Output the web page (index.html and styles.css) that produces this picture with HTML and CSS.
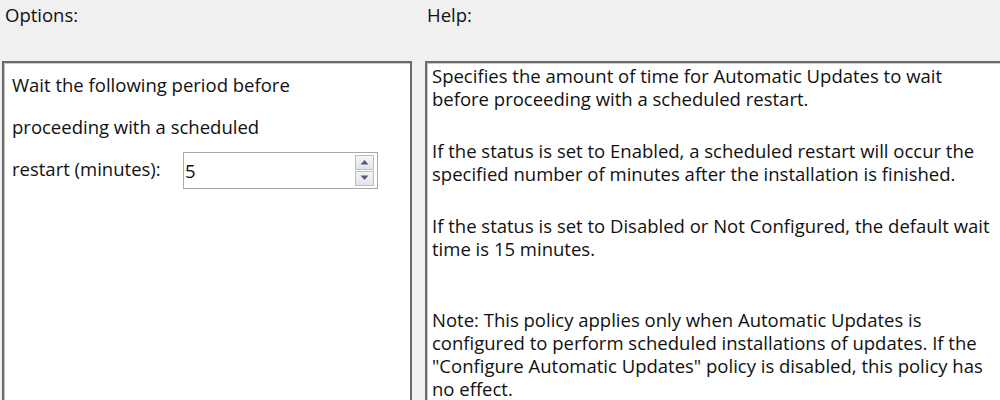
FILE: index.html
```html
<!DOCTYPE html>
<html>
<head>
<meta charset="utf-8">
<link rel="stylesheet" href="styles.css">
</head>
<body>
<div class="dialog">
  <div class="col col-left">
    <div class="label">Options:</div>
    <div class="panel panel-options">
      <div class="opt-line">Wait the following period before</div>
      <div class="opt-line">proceeding with a scheduled</div>
      <div class="opt-line opt-row">
        <span class="opt-label">restart (minutes):</span>
        <div class="spin">
          <span class="spin-value">5</span>
          <div class="spin-buttons">
            <div class="spin-btn"><svg width="9" height="6" viewBox="0 0 9 6"><path d="M0.5 5.5 L4.5 1 L8.5 5.5 Z" fill="#4a5a78"/></svg></div>
            <div class="spin-btn"><svg width="9" height="6" viewBox="0 0 9 6"><path d="M0.5 0.5 L4.5 5 L8.5 0.5 Z" fill="#4a5a78"/></svg></div>
          </div>
        </div>
      </div>
    </div>
  </div>
  <div class="col col-right">
    <div class="label">Help:</div>
    <div class="panel panel-help">
      <p>Specifies the amount of time for Automatic Updates to wait<br>before proceeding with a scheduled restart.</p>
      <p>If the status is set to Enabled, a scheduled restart will occur the<br>specified number of minutes after the installation is finished.</p>
      <p>If the status is set to Disabled or Not Configured, the default wait<br>time is 15 minutes.</p>
      <p class="note">Note: This policy applies only when Automatic Updates is<br>configured to perform scheduled installations of updates. If the<br>"Configure Automatic Updates" policy is disabled, this policy has<br>no effect.</p>
    </div>
  </div>
</div>
</body>
</html>
```
FILE: styles.css
```css
html, body {
  margin: 0;
  padding: 0;
  background: #f0f0f0;
  overflow: hidden;
}
body {
  width: 1000px;
  height: 400px;
  font-family: "Open Sans", "Noto Sans", sans-serif;
  font-size: 18.5px;
  color: #111;
}
.dialog {
  display: flex;
  gap: 13px;
  padding-left: 2px;
  height: 400px;
}
.col {
  display: flex;
  flex-direction: column;
}
.col-left {
  width: 410px;
  flex: none;
}
.col-right {
  width: 600px;
  flex: none;
}
.label {
  flex: none;
  height: 61px;
  padding-left: 3px;
  line-height: 30px;
}
.col-right .label {
  padding-left: 2px;
}
.panel {
  flex: 1;
  min-height: 0;
  overflow: hidden;
  background: #fff;
  border: 2px solid #6b6b6b;
  border-bottom: none;
  box-shadow: inset 1px 1px 0 #c8c8c8;
}
.panel-options {
  padding: 1px 0 0 8px;
}
.opt-line {
  height: 42px;
  line-height: 42px;
  white-space: nowrap;
}
.opt-row {
  display: flex;
  align-items: center;
}
.opt-label {
  width: 171px;
}
.spin {
  width: 195px;
  height: 37px;
  box-sizing: border-box;
  border: 1px solid #a8a8a8;
  background: #fff;
  display: flex;
  align-items: stretch;
  justify-content: space-between;
  margin-top: 2px;
}
.spin-value {
  padding-left: 1px;
  line-height: 35px;
}
.spin-buttons {
  width: 19px;
  margin: 2px 3px 2px 0;
  display: flex;
  flex-direction: column;
  gap: 1px;
}
.spin-btn {
  flex: 1;
  border: 1px solid #b9bdc6;
  background: linear-gradient(#f4f5f7, #e2e4ea);
  display: flex;
  align-items: center;
  justify-content: center;
}
.panel-help {
  padding: 1px 0 0 5px;
  line-height: 23px;
  white-space: nowrap;
}
.panel-help p {
  margin: 0 0 29px 0;
}
.panel-help p.note {
  margin-top: 48px;
}
```
